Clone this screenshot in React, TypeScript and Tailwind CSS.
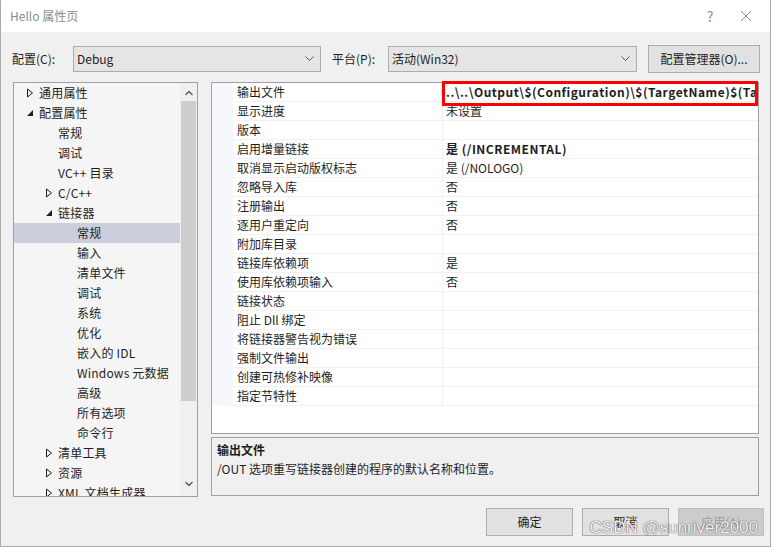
import { ChevronDown, ChevronUp } from 'lucide-react';

type TreeItem = { label: string; level: number; arrow?: 'open' | 'closed'; selected?: boolean };

const tree: TreeItem[] = [
  { label: '通用属性', level: 0, arrow: 'closed' },
  { label: '配置属性', level: 0, arrow: 'open' },
  { label: '常规', level: 1 },
  { label: '调试', level: 1 },
  { label: 'VC++ 目录', level: 1 },
  { label: 'C/C++', level: 1, arrow: 'closed' },
  { label: '链接器', level: 1, arrow: 'open' },
  { label: '常规', level: 2, selected: true },
  { label: '输入', level: 2 },
  { label: '清单文件', level: 2 },
  { label: '调试', level: 2 },
  { label: '系统', level: 2 },
  { label: '优化', level: 2 },
  { label: '嵌入的 IDL', level: 2 },
  { label: 'Windows 元数据', level: 2 },
  { label: '高级', level: 2 },
  { label: '所有选项', level: 2 },
  { label: '命令行', level: 2 },
  { label: '清单工具', level: 1, arrow: 'closed' },
  { label: '资源', level: 1, arrow: 'closed' },
  { label: 'XML 文档生成器', level: 1, arrow: 'closed' },
];

const props: [string, string, boolean?][] = [
  ['输出文件', '..\\..\\Output\\$(Configuration)\\$(TargetName)$(TargetExt)', true],
  ['显示进度', '未设置'],
  ['版本', ''],
  ['启用增量链接', '是 (/INCREMENTAL)', true],
  ['取消显示启动版权标志', '是 (/NOLOGO)'],
  ['忽略导入库', '否'],
  ['注册输出', '否'],
  ['逐用户重定向', '否'],
  ['附加库目录', ''],
  ['链接库依赖项', '是'],
  ['使用库依赖项输入', '否'],
  ['链接状态', ''],
  ['阻止 Dll 绑定', ''],
  ['将链接器警告视为错误', ''],
  ['强制文件输出', ''],
  ['创建可热修补映像', ''],
  ['指定节特性', ''],
];

const font = { fontFamily: '"Noto Sans CJK SC", "Noto Sans", sans-serif' };

function Arrow({ open }: { open: boolean }) {
  return open ? (
    <svg width="8" height="8" viewBox="0 0 8 8"><path d="M7 1 L7 7 L1 7 Z" fill="#1e1e1e" /></svg>
  ) : (
    <svg width="8" height="10" viewBox="0 0 8 10"><path d="M1.5 1 L6.5 5 L1.5 9 Z" fill="none" stroke="#1e1e1e" strokeWidth="1" /></svg>
  );
}

function Combo({ value, w }: { value: string; w: string }) {
  return (
    <div className={`${w} h-[26px] flex items-center justify-between border border-[#adadad] bg-[#e5e5e5] pl-[3px] pr-[6px] text-[12px] text-[#1e1e1e]`}>
      <span>{value}</span>
      <svg width="9" height="6" viewBox="0 0 9 6"><path d="M0.5 0.5 L4.5 4.5 L8.5 0.5" fill="none" stroke="#555" strokeWidth="1" /></svg>
    </div>
  );
}

export default function App() {
  return (
    <div className="w-[772px] h-[549px] bg-white overflow-hidden" style={font}>
      <div className="w-[771px] h-[547px] border-l border-r border-b border-[#aaaaaa] flex flex-col bg-[#f0f0f0]">
        {/* 标题栏 */}
        <div className="h-[32px] bg-white flex items-center pl-[9px] text-[12px] text-[#8c8c8c]">
          <span className="flex-1">Hello 属性页</span>
          <span className="w-[20px] text-center text-[14px] mr-[20px]">?</span>
          <svg width="12" height="12" viewBox="0 0 12 12" className="mr-[18px]"><path d="M1 1 L11 11 M11 1 L1 11" stroke="#8c8c8c" strokeWidth="1" /></svg>
        </div>

        {/* 配置行 */}
        <div className="flex items-center pt-[13px] pl-[11px] text-[12px] text-[#1e1e1e]">
          <span className="w-[61px]">配置(C):</span>
          <Combo value="Debug" w="w-[248px]" />
          <span className="ml-[11px] w-[56px]">平台(P):</span>
          <Combo value="活动(Win32)" w="w-[249px]" />
          <div className="ml-[11px] w-[112px] h-[28px] border border-[#adadad] bg-[#e1e1e1] flex items-center justify-center">配置管理器(O)...</div>
        </div>

        {/* 主体 */}
        <div className="flex pt-[9px] pl-[12px] gap-[13px]">
          {/* 树 */}
          <div className="w-[185px] h-[415px] border border-[#a0a0a0] bg-[#f5f5f5] flex">
            <div className="flex-1 overflow-hidden text-[12px] text-[#1e1e1e]">
              {tree.map((t, i) => (
                <div key={i} className={`h-[20px] flex items-center ${t.selected ? 'bg-[#cccedb]' : ''}`}
                  style={{ paddingLeft: 6 + t.level * 19 }}>
                  <span className="w-[19px] flex justify-center items-center pl-[1px]">{t.arrow && <Arrow open={t.arrow === 'open'} />}</span>
                  <span className="tracking-[0.2px]">{t.label}</span>
                </div>
              ))}
            </div>
            <div className="w-[17px] bg-[#f0f0f0] flex flex-col items-center">
              <ChevronUp size={12} strokeWidth={3} color="#606060" className="mt-[4px] mb-[2px]" />
              <div className="w-[15px] h-[300px] bg-[#cdcdcd]" />
              <div className="flex-1" />
              <ChevronDown size={12} strokeWidth={3} color="#606060" className="mb-[6px]" />
            </div>
          </div>

          {/* 属性网格 + 说明 */}
          <div className="w-[548px] flex flex-col gap-[3px]">
            <div className="h-[352px] border border-[#a0a0a0] bg-white relative">
              {props.map(([name, value, bold], i) => (
                <div key={i} className="h-[19px] flex text-[12px] text-[#1e1e1e]">
                  <div className="w-[21px] bg-[#f5f7fb]" />
                  <div className="w-[210px] pl-[4px] flex items-center border-b border-[#f0f2f5] border-r">{name}</div>
                  <div className={`flex-1 pl-[3px] flex items-center border-b border-[#f0f2f5] whitespace-nowrap overflow-hidden ${bold ? 'font-bold tracking-[0.5px]' : ''}`}>{value}</div>
                </div>
              ))}
              <div className="absolute left-[230px] top-[-2px] w-[316px] h-[25px] border-[3px] border-[#ff0000]" />
            </div>
            <div className="h-[59px] border border-[#a0a0a0] bg-[#f0f0f0] px-[5px] pt-[2px] text-[12px] text-[#1e1e1e] leading-[19px]">
              <div className="font-bold">输出文件</div>
              <div>/OUT 选项重写链接器创建的程序的默认名称和位置。</div>
            </div>
          </div>
        </div>

        {/* 按钮 */}
        <div className="flex justify-end gap-[9px] pt-[11px] pr-[6px] text-[12px] relative">
          <div className="w-[87px] h-[28px] border border-[#adadad] bg-[#e1e1e1] flex items-center justify-center text-[#1e1e1e]">确定</div>
          <div className="w-[87px] h-[28px] border border-[#adadad] bg-[#e1e1e1] flex items-center justify-center text-[#1e1e1e]">取消</div>
          <div className="w-[86px] h-[28px] border border-[#bfbfbf] bg-[#cccccc] flex items-center justify-center text-[#a0a0a0]">应用(A)</div>
          <div className="absolute right-[12px] top-[18px] text-[17px] text-[#f4f4f4] [text-shadow:0_0_1px_#555,0_0_1px_#555]"
            style={{ fontFamily: '"Liberation Sans", Arial, sans-serif' }}>CSDN @sunriver2000</div>
        </div>
      </div>
    </div>
  );
}
